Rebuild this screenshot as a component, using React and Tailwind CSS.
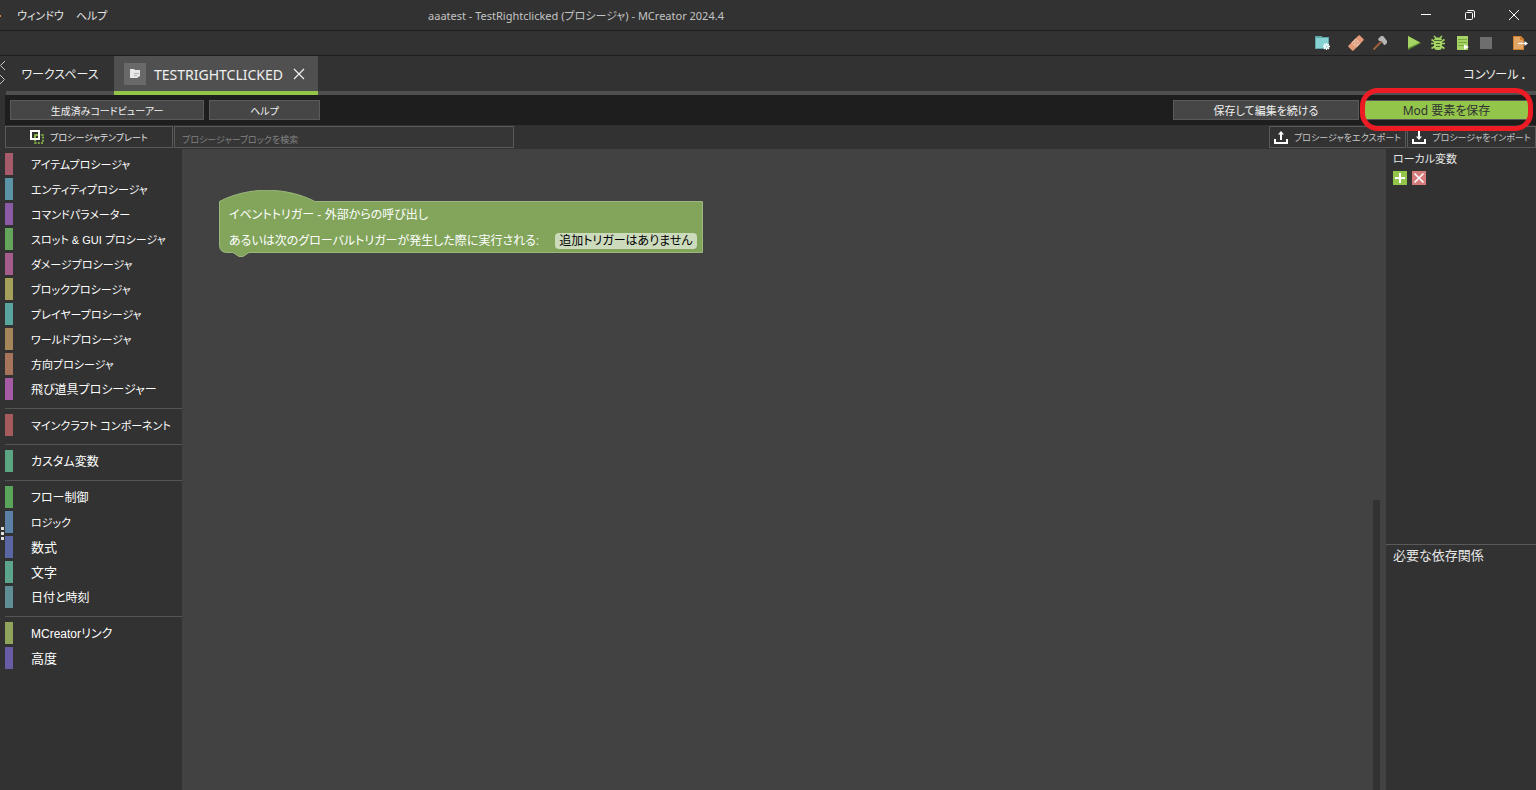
import React, { useState } from 'react';

const categoryGroups = [
  [
    { name: 'アイテムプロシージャ', color: 'bg-[#a55b69]', size: 'text-[11px]' },
    { name: 'エンティティプロシージャ', color: 'bg-[#5b95a5]', size: 'text-[11px]' },
    { name: 'コマンドパラメーター', color: 'bg-[#8b5ba5]', size: 'text-[11px]' },
    { name: 'スロット & GUI プロシージャ', color: 'bg-[#65a55b]', size: 'text-[11px]' },
    { name: 'ダメージプロシージャ', color: 'bg-[#a55b8b]', size: 'text-[11px]' },
    { name: 'ブロックプロシージャ', color: 'bg-[#a5a15b]', size: 'text-[11px]' },
    { name: 'プレイヤープロシージャ', color: 'bg-[#5ba5a0]', size: 'text-[11px]' },
    { name: 'ワールドプロシージャ', color: 'bg-[#a5865b]', size: 'text-[11px]' },
    { name: '方向プロシージャ', color: 'bg-[#a5745b]', size: 'text-[11px]' },
    { name: '飛び道具プロシージャー', color: 'bg-[#a55ba5]', size: 'text-[12px]' },
  ],
  [{ name: 'マインクラフト コンポーネント', color: 'bg-[#a55b5b]', size: 'text-[11px]' }],
  [{ name: 'カスタム変数', color: 'bg-[#5ba582]', size: 'text-[12px]' }],
  [
    { name: 'フロー制御', color: 'bg-[#5ba55b]', size: 'text-[12px]' },
    { name: 'ロジック', color: 'bg-[#5b80a5]', size: 'text-[11px]' },
    { name: '数式', color: 'bg-[#5b67a5]', size: 'text-[13px]' },
    { name: '文字', color: 'bg-[#5ba58c]', size: 'text-[13px]' },
    { name: '日付と時刻', color: 'bg-[#5f8e96]', size: 'text-[12px]' },
  ],
  [
    { name: 'MCreatorリンク', color: 'bg-[#90a55b]', size: 'text-[12px]' },
    { name: '高度', color: 'bg-[#695ba5]', size: 'text-[13px]' },
  ],
];

const FolderIcon = () => (
  <svg width="16" height="16" viewBox="0 0 16 16">
    <path d="M1 1h7v1h7v12H1z" fill="#5fa5a8" />
    <path d="M2 3h12v10H2z" fill="#86d1d1" />
    <path d="M12.500 8v7M9 11.500h7M10 9l5 5M15 9l-5 5" stroke="#fff" strokeWidth="1.300" />
    <circle cx="12.500" cy="11.500" r="1" fill="#86d1d1" />
  </svg>
);

const BandageIcon = () => (
  <svg width="16" height="16" viewBox="0 0 16 16">
    <g transform="rotate(-45 8 8)">
      <rect x="0" y="4.500" width="16" height="7" rx="1" fill="#e39a78" />
      <rect x="5" y="4.500" width="6" height="7" fill="#f0bfa4" />
      <path d="M6 6.500h1M9 6.500h1M7.500 8h1M6 9.500h1M9 9.500h1" stroke="#a8603f" strokeWidth="1" />
    </g>
  </svg>
);

const HammerIcon = () => (
  <svg width="16" height="16" viewBox="0 0 16 16">
    <path d="M1.500 14.500L9.500 6.500" stroke="#a0643c" strokeWidth="1.800" />
    <path d="M6 4l3-3h2l1 1 3 4v2l-2 2h-1l-2-3-1-1H7z" fill="#b5b5b5" />
  </svg>
);

const PlayIcon = () => (
  <svg width="16" height="16" viewBox="0 0 16 16">
    <path d="M2 1v14l13-7z" fill="#5f8a2c" />
    <path d="M2 1v12l12-5.500z" fill="#a5d465" />
  </svg>
);

const BugIcon = () => (
  <svg width="16" height="16" viewBox="0 0 16 16">
    <path d="M4 1l2 2M12 1l-2 2M1.500 4.500l3 2M14.500 4.500l-3 2M1 8.500h14M1.500 13.500l3-2M14.500 13.500l-3-2" stroke="#a5d465" strokeWidth="1.600" />
    <rect x="4" y="2.500" width="8" height="12.500" rx="3" fill="#a5d465" />
    <path d="M4 5.500h8M6 8.500h4M6 11.500h4" stroke="#4c6b26" strokeWidth="1" />
  </svg>
);

const ScriptIcon = () => (
  <svg width="16" height="16" viewBox="0 0 16 16">
    <path d="M3 1h11v14H3z" fill="#a5d465" />
    <path d="M4 4.500h9M4 7.500h9M4 10.500h6" stroke="#7ba63f" />
    <path d="M10 9.500v5l5-2.500z" fill="#fff" />
  </svg>
);

const StopIcon = () => (
  <svg width="16" height="16" viewBox="0 0 16 16">
    <path d="M2 2h12v12H2z" fill="#6e6e6e" />
  </svg>
);

const ExitIcon = () => (
  <svg width="16" height="16" viewBox="0 0 16 16">
    <path d="M1 1h8l3 3v11H1z" fill="#cf7f2e" />
    <path d="M2 2h6v3h3v9H2z" fill="#e3a566" />
    <path d="M6 8.500h8" stroke="#fff" strokeWidth="1.200" />
    <path d="M12.500 6v5l3.500-2.500z" fill="#fff" />
  </svg>
);

const TemplateIcon = () => (
  <svg width="14" height="14" viewBox="0 0 14 14" className="shrink-0">
    <path d="M5 5h8v8H5z" fill="none" stroke="#93c54b" strokeWidth="1.600" strokeDasharray="2 1.200" />
    <path d="M1 1h8v8H1z" fill="none" stroke="#fff" strokeWidth="2" />
    <path d="M5 8V5h3" fill="none" stroke="#93c54b" strokeWidth="1.600" />
  </svg>
);

const ExportIcon = () => (
  <svg width="14" height="14" viewBox="0 0 14 14" fill="none" stroke="#fff" strokeWidth="2" className="shrink-0">
    <path d="M1 9v4h12V9M7 10V2" />
    <path d="M4 4.500L7 1l3 3.500z" fill="#fff" stroke="none" />
  </svg>
);

const ImportIcon = () => (
  <svg width="14" height="14" viewBox="0 0 14 14" fill="none" stroke="#fff" strokeWidth="2" className="shrink-0">
    <path d="M1 9v4h12V9M7 1v6" />
    <path d="M4 6.500L7 10l3-3.500z" fill="#fff" stroke="none" />
  </svg>
);

const TitleBar = () => (
  <header className="flex h-[31px] justify-between border-b border-[#1e1e1e]">
    <div className="grid w-3/4 grid-cols-[1fr_auto_1fr] items-center pt-[2px] text-[11px]">
      <nav className="flex items-center text-[#e6e6e6]">
        <span className="h-[2px] w-px bg-[#c98a3c]"></span>
        <button className="ml-4">ウィンドウ</button>
        <button className="ml-3">ヘルプ</button>
      </nav>
      <h1 className="text-[#c4c4c4]">aaatest - TestRightclicked (プロシージャ) - MCreator 2024.4</h1>
    </div>
    <div className="flex">
      <button aria-label="最小化" className="flex w-11 items-center justify-center">
        <svg width="12" height="12" viewBox="0 0 12 12"><path d="M1 5.500h10" stroke="#fff" /></svg>
      </button>
      <button aria-label="元に戻す" className="flex w-11 items-center justify-center">
        <svg width="12" height="12" viewBox="0 0 12 12" fill="none" stroke="#fff">
          <rect x="1.500" y="3.500" width="7" height="7" rx="1" />
          <path d="M3.500 1.500H9a1.500 1.500 0 0 1 1.500 1.500v5.500" />
        </svg>
      </button>
      <button aria-label="閉じる" className="flex w-11 items-center justify-center">
        <svg width="12" height="12" viewBox="0 0 12 12" stroke="#fff"><path d="M1 1l10 10M11 1L1 11" /></svg>
      </button>
    </div>
  </header>
);

const ToolButton = ({ label, gap, children }) => (
  <button aria-label={label} className={`flex w-6 items-center justify-center ${gap ? 'ml-[10px]' : ''}`}>
    {children}
  </button>
);

const Toolbar = () => (
  <div className="flex h-[25px] justify-end border-b border-[#1e1e1e] pr-1">
    <ToolButton label="ワークスペース設定"><FolderIcon /></ToolButton>
    <ToolButton label="修復" gap><BandageIcon /></ToolButton>
    <ToolButton label="ビルド"><HammerIcon /></ToolButton>
    <ToolButton label="実行" gap><PlayIcon /></ToolButton>
    <ToolButton label="デバッグ"><BugIcon /></ToolButton>
    <ToolButton label="サーバー"><ScriptIcon /></ToolButton>
    <ToolButton label="停止"><StopIcon /></ToolButton>
    <ToolButton label="エクスポート" gap><ExitIcon /></ToolButton>
  </div>
);

const Tabs = () => (
  <div className="ml-px flex h-[39px] border-b-4 border-[#505050] text-[12px] text-[#f0f0f0]">
    <button className="w-[108px] pt-[2px]">ワークスペース</button>
    <div className="-mb-1 flex w-[204px] items-center border-b-4 border-[#93c54b] bg-[#505050] pl-[10px]">
      <span className="flex h-[22px] w-[22px] items-center justify-center bg-[#696969]">
        <svg width="12" height="10" viewBox="0 0 12 10">
          <path d="M1 0h4l1 1h5v6l-3 2H1z" fill="#e8e8e8" />
          <path d="M5 4.500h5M5 6.500h3" stroke="#b4b4b4" />
        </svg>
      </span>
      <button className="ml-2 pt-[2px] text-[14px]">TESTRIGHTCLICKED</button>
      <button aria-label="閉じる" className="ml-[10px]">
        <svg width="12" height="12" viewBox="0 0 12 12" stroke="#f0f0f0" strokeWidth="1.200"><path d="M1 1l10 10M11 1L1 11" /></svg>
      </button>
    </div>
    <button className="ml-auto mr-[11px] pt-[2px]">コンソール <b>.</b></button>
  </div>
);

const ActionBar = () => (
  <div className="flex h-[30px] items-center bg-[#1e1e1e] pl-[5px] pr-[7px] text-[11px] text-[#f0f0f0]">
    <button className="h-5 w-[194px] border border-[#5a5a5a] bg-[#464646] text-[10px] leading-5">生成済みコードビューアー</button>
    <button className="ml-[5px] h-5 w-[111px] border border-[#5a5a5a] bg-[#464646] text-[10px] leading-5">ヘルプ</button>
    <button className="ml-auto h-5 w-[186px] border border-[#5a5a5a] bg-[#464646] leading-5">保存して編集を続ける</button>
    <div className="relative ml-[5px]">
      <button className="block h-5 w-[165px] border-y border-[#5a5a5a] bg-[#93c54b] text-[12px] leading-5 text-[#323232]">Mod 要素を保存</button>
      <span className="pointer-events-none absolute -inset-x-1 -top-3 -bottom-[11px] z-10 rounded-[18px] border-[5px] border-[#ed1c24]"></span>
    </div>
  </div>
);

const SearchBar = () => {
  const [query, setQuery] = useState('');

  return (
    <div className="flex h-6 items-center whitespace-nowrap text-[9px] text-[#e6e6e6]">
      <button className="flex h-[22px] w-[168px] items-center justify-center gap-[6px] border border-[#5a5a5a]">
        <TemplateIcon />
        <span className="pt-[2px]">プロシージャテンプレート</span>
      </button>
      <input
        type="text"
        aria-label="プロシージャーブロックを検索"
        placeholder="プロシージャーブロックを検索"
        value={query}
        onChange={(e) => setQuery(e.target.value)}
        className="ml-px h-[22px] w-[340px] border border-[#5a5a5a] bg-[#363636] px-[7px] pt-1 placeholder:text-[#828282]"
      />
      <button className="ml-auto flex h-[22px] w-[137px] items-center justify-center gap-[6px] border border-[#5a5a5a] text-[#c8c8c8]">
        <ExportIcon />
        <span className="pt-[2px]">プロシージャをエクスポート</span>
      </button>
      <button className="ml-px flex h-[22px] w-[129px] items-center justify-center gap-[6px] border border-[#5a5a5a] text-[#c8c8c8]">
        <ImportIcon />
        <span className="pt-[2px]">プロシージャをインポート</span>
      </button>
    </div>
  );
};

const Categories = () => (
  <aside className="w-[177px] pt-1 font-['Liberation_Sans','Noto_Sans_CJK_JP',sans-serif] text-white">
    {categoryGroups.map((group, index) => (
      <ul key={index} className={`flex flex-col gap-[3px] pb-2 ${index > 0 ? 'border-t border-[#555555] pt-[5px]' : ''}`}>
        {group.map((category) => (
          <li key={category.name} className="flex h-[22px] items-center whitespace-nowrap">
            <span className={`h-full w-2 shrink-0 ${category.color}`}></span>
            <button className={`ml-[18px] pt-[2px] leading-[22px] ${category.size}`}>{category.name}</button>
          </li>
        ))}
      </ul>
    ))}
  </aside>
);

const Canvas = () => (
  <main className="relative flex-1 bg-[#424242]">
    {/* event trigger block */}
    <div className="absolute left-[37px] top-[41px] w-[486px] font-['Liberation_Sans','Noto_Sans_CJK_JP',sans-serif] text-[12px] text-white">
      <svg className="absolute left-0 top-0" width="486" height="68" viewBox="0 0 486 68">
        <path
          d="M0.500 11.500C29 -3.500 67 -3.500 96 11.500H483.500V62.500H30L24 66.500H20L14 62.500H8Q0.500 62.500 0.500 55z"
          fill="#82a55b"
          stroke="#9bb77c"
        />
      </svg>
      <div className="relative whitespace-nowrap pl-[10px] pt-3">
        <p className="leading-[26px]">イベントトリガー - 外部からの呼び出し</p>
        <p className="flex items-center leading-[26px]">
          あるいは次のグローバルトリガーが発生した際に実行される:
          <span className="ml-4 rounded bg-[#cddbbd] px-1 leading-4 text-black">追加トリガーはありません</span>
        </p>
      </div>
    </div>
    <div className="absolute bottom-0 right-[6px] top-[351px] w-[7px] bg-[#323232]"></div>
  </main>
);

const VariablesPanel = () => (
  <aside className="flex w-[150px] flex-col text-[#e6e6e6]">
    <section className="h-[395px] pl-[7px]">
      <h2 className="text-[11px] leading-[20px]">ローカル変数</h2>
      <div className="mt-[2px] flex gap-[5px]">
        <button aria-label="追加" className="h-[14px] w-[14px] bg-[#93c54b]">
          <svg width="14" height="14" viewBox="0 0 14 14" stroke="#fff" strokeWidth="2"><path d="M7 2v10M2 7h10" /></svg>
        </button>
        <button aria-label="削除" className="h-[14px] w-[14px] bg-[#d47c7c]">
          <svg width="14" height="14" viewBox="0 0 14 14" stroke="#fff" strokeWidth="1.500"><path d="M2.500 2.500l9 9M11.500 2.500l-9 9" /></svg>
        </button>
      </div>
    </section>
    <section className="flex-1 border-t border-[#5a5a5a] pl-[7px]">
      <h2 className="text-[13px] leading-[20px]">必要な依存関係</h2>
    </section>
  </aside>
);

const App = () => {
  return (
    <div className="flex h-screen flex-col overflow-hidden bg-[#323232] font-['Noto_Sans','Noto_Sans_CJK_JP',sans-serif] [font-feature-settings:'palt']">
      <TitleBar />
      <Toolbar />
      <div className="flex min-h-0 flex-1">
        <div className="relative w-[5px] shrink-0">
          <svg className="absolute left-0 top-1" width="5" height="26" viewBox="0 0 5 26" fill="none" stroke="#c8c8c8">
            <path d="M5 1L0.500 5.500L5 10M0 15L4.500 19.500L0 24" />
          </svg>
          <svg className="absolute left-0 top-[470px]" width="5" height="16" viewBox="0 0 5 16" fill="#e0e0e0">
            <path d="M1 1h3v3H1zM1 6h3v3H1zM1 11h3v3H1z" />
          </svg>
        </div>
        <div className="flex min-w-0 flex-1 flex-col">
          <Tabs />
          <ActionBar />
          <SearchBar />
          <div className="flex min-h-0 flex-1">
            <Categories />
            <Canvas />
            <VariablesPanel />
          </div>
        </div>
      </div>
    </div>
  );
};

export default App;
